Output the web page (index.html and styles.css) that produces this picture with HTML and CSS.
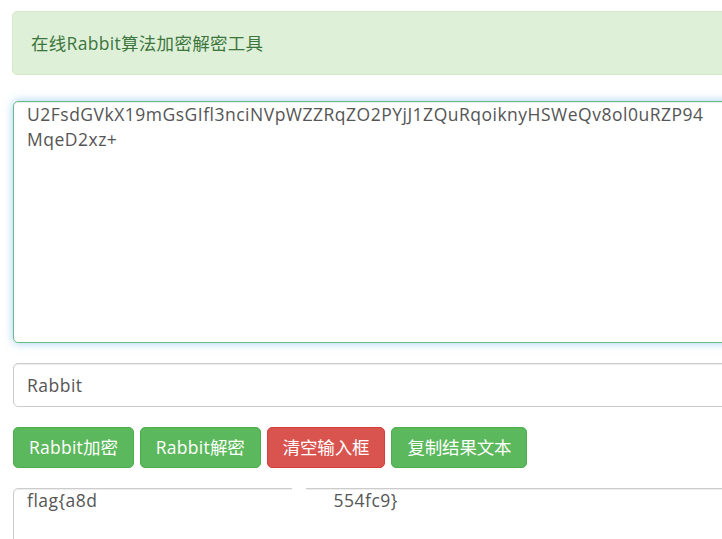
FILE: index.html
```html
<!DOCTYPE html>
<html lang="zh-CN">
<head>
<meta charset="utf-8">
<title>在线Rabbit算法加密解密工具</title>
<link rel="stylesheet" href="styles.css">
</head>
<body>
<div class="page">
  <div class="alert">在线Rabbit算法加密解密工具</div>
  <div class="box box-focus">
    <div class="box-text">U2FsdGVkX19mGsGIfl3nciNVpWZZRqZO2PYjJ1ZQuRqoiknyHSWeQv8ol0uRZP94<br>MqeD2xz+</div>
  </div>
  <div class="field">Rabbit</div>
  <div class="actions">
    <button class="btn btn-success"><span class="latin">Rabbit</span>加密</button>
    <button class="btn btn-success"><span class="latin">Rabbit</span>解密</button>
    <button class="btn btn-danger">清空输入框</button>
    <button class="btn btn-success">复制结果文本</button>
  </div>
  <div class="box box-result">
    <div class="box-text">flag{a8d<span class="hidden-part"></span>554fc9}</div>
    <span class="mask"></span>
  </div>
</div>
</body>
</html>
```
FILE: styles.css
```css
html, body {
  margin: 0;
  padding: 0;
  overflow: hidden;
  background: #fff;
}
body {
  font-family: "Open Sans", "Noto Sans CJK SC", sans-serif;
  font-size: 17.5px;
  line-height: 25px;
  color: #555;
}
.page {
  width: 780px;
  padding: 11px 0 0 12px;
  display: flex;
  flex-direction: column;
}
.alert {
  background: #dff0d8;
  border: 1px solid #d6e9c6;
  border-radius: 5px;
  color: #3c763d;
  padding: 19px 18px 18px;
  margin-bottom: 26px;
  letter-spacing: 0.3px;
}
.box {
  margin-left: 1px;
  border: 1px solid #ccc;
  border-radius: 5px;
  padding: 0 13px;
  position: relative;
  box-shadow: inset 0 1px 1px rgba(0,0,0,.075);
  letter-spacing: 0.5px;
}
.box-focus {
  height: 240px;
  overflow: hidden;
  border-color: #66bb88;
  box-shadow: inset 0 1px 1px rgba(0,0,0,.075), 0 0 10px rgba(102,175,233,.6);
}
.box-text {
  white-space: nowrap;
  overflow: hidden;
}
.field {
  margin: 20px 0 0 1px;
  height: 42px;
  line-height: 42px;
  border: 1px solid #ccc;
  border-radius: 5px;
  padding: 0 13px;
  box-shadow: inset 0 1px 1px rgba(0,0,0,.075);
  letter-spacing: 0.5px;
}
.actions {
  margin: 20px 0 0 1px;
  display: flex;
  gap: 6px;
}
.btn {
  font: inherit;
  color: #fff;
  border: 1px solid;
  border-radius: 5px;
  padding: 7px 15px;
  line-height: 25px;
  letter-spacing: -0.15px;
  cursor: pointer;
}
.btn .latin {
  letter-spacing: 0.25px;
}
.btn-success {
  background: #5cb85c;
  border-color: #4cae4c;
}
.btn-danger {
  background: #d9534f;
  border-color: #d43f3a;
}
.box-result {
  margin-top: 20px;
  height: 100px;
}
.box-result .box-text {
  margin-top: -1px;
}
.hidden-part {
  display: inline-block;
  width: 236px;
}
.mask {
  position: absolute;
  top: -2px;
  left: 278px;
  width: 14px;
  height: 4px;
  background: #fff;
}
```
